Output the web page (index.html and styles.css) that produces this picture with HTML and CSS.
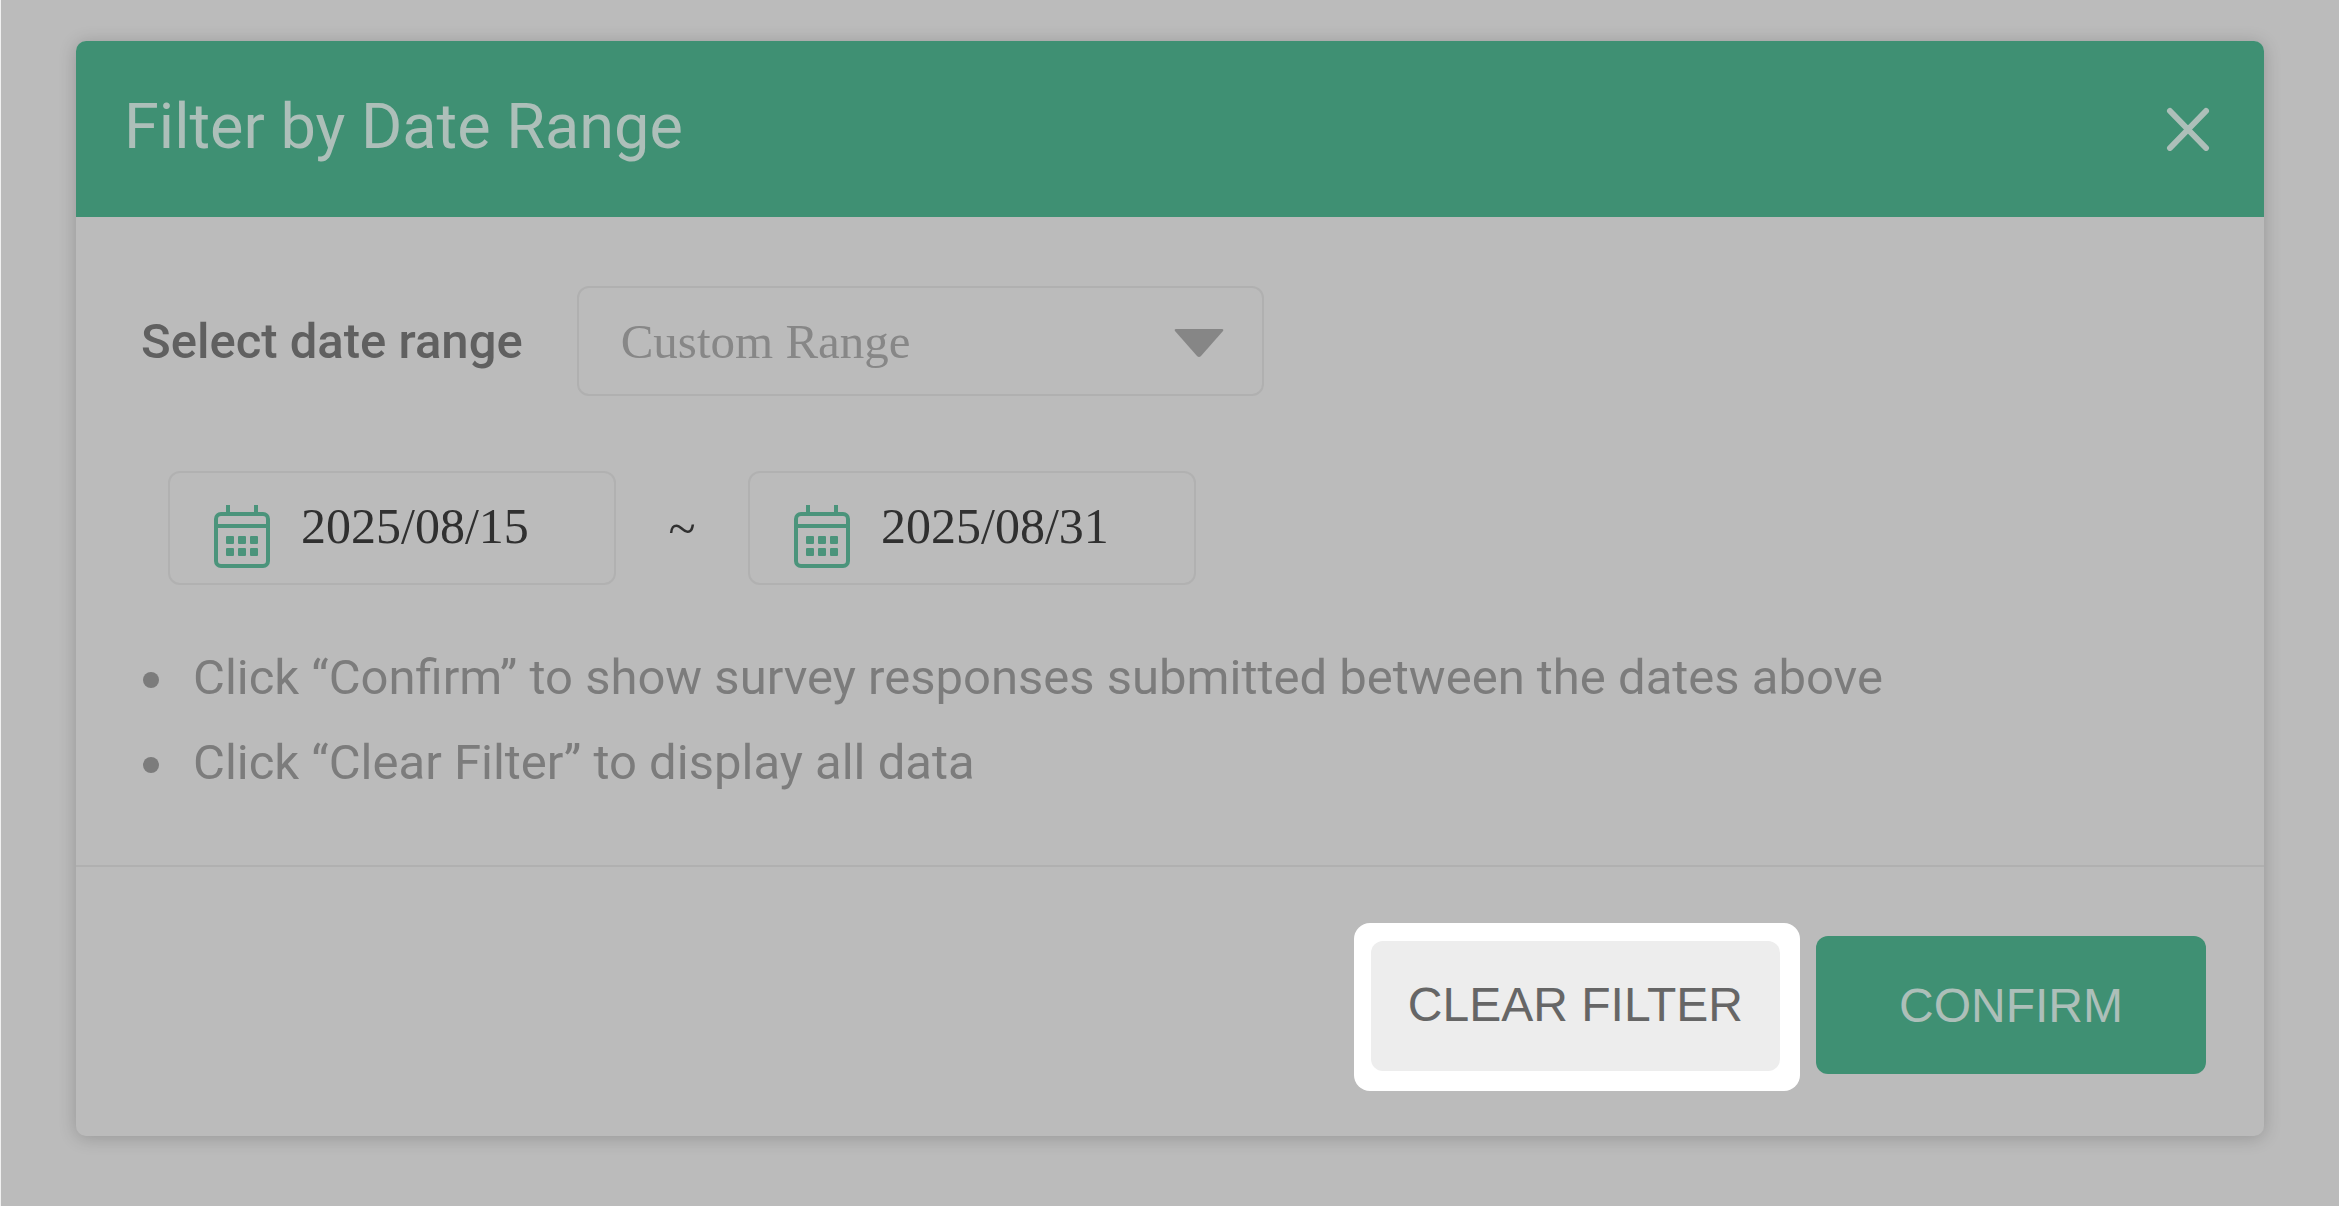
FILE: index.html
```
<!DOCTYPE html>
<html lang="en">
<head>
    <meta charset="UTF-8">
    <meta name="viewport" content="width=device-width, initial-scale=1.0">
    <title>Filter by Date Range</title>
    <link rel="stylesheet" href="styles.css">
</head>
<body>
    <div class="modal">
        <div class="modal-header">
            <h2>Filter by Date Range</h2>
            <button type="button" class="close" aria-label="Close">
                <svg width="44" height="44" viewBox="0 0 44 44">
                    <path d="M4 4L40 41M40 4L4 41" />
                </svg>
            </button>
        </div>

        <div class="modal-body">
            <div class="range-row">
                <label for="range">Select date range</label>
                <div class="select-box">
                    <select id="range">
                        <option>Custom Range</option>
                    </select>
                    <svg class="arrow" width="50" height="28" viewBox="0 0 50 28">
                        <path d="M2 0H48Q50 0 49 2L27 27Q25 29 23 27L1 2Q0 0 2 0Z" />
                    </svg>
                </div>
            </div>

            <div class="date-row">
                <label class="date-box">
                    <svg class="calendar" width="56" height="64" viewBox="0 0 56 64">
                        <rect x="2" y="10" width="52" height="52" rx="5" />
                        <path d="M2 22H54M14 1V10M42 1V10" />
                        <path class="days" d="M13 33h6v6h-6zM25 33h6v6h-6zM37 33h6v6h-6zM13 45h6v6h-6zM25 45h6v6h-6zM37 45h6v6h-6z" />
                    </svg>
                    <input type="text" value="2025/08/15" aria-label="Start date">
                </label>
                <span class="tilde">~</span>
                <label class="date-box">
                    <svg class="calendar" width="56" height="64" viewBox="0 0 56 64">
                        <rect x="2" y="10" width="52" height="52" rx="5" />
                        <path d="M2 22H54M14 1V10M42 1V10" />
                        <path class="days" d="M13 33h6v6h-6zM25 33h6v6h-6zM37 33h6v6h-6zM13 45h6v6h-6zM25 45h6v6h-6zM37 45h6v6h-6z" />
                    </svg>
                    <input type="text" value="2025/08/31" aria-label="End date">
                </label>
            </div>

            <ul class="notes">
                <li>Click “Confirm” to show survey responses submitted between the dates above</li>
                <li>Click “Clear Filter” to display all data</li>
            </ul>
        </div>

        <div class="modal-footer">
            <div class="highlight">
                <button type="button" class="btn clear">CLEAR FILTER</button>
            </div>
            <button type="button" class="btn confirm">CONFIRM</button>
        </div>
    </div>
</body>
</html>
```
FILE: styles.css
```
* {
    box-sizing: border-box;
}
body {
    margin: 0;
    padding: 41px 75px 68px;
    min-height: 100vh;
    border-left: 1px solid #f0f0f0;
    background: #bbbbbb;
    font-family: Roboto, sans-serif;
    font-size: 49px;
}
.modal {
    border-radius: 10px;
    background: #bbbbbb;
    box-shadow: 0 2px 18px rgba(0, 0, 0, 0.2);
}
.modal-header {
    display: flex;
    justify-content: space-between;
    align-items: center;
    height: 176px;
    padding: 0 54px 0 48px;
    border-radius: 10px 10px 0 0;
    background: #3f9073;
}
.modal-header h2 {
    margin: 0 0 6px;
    color: #adbfb9;
    font-size: 63px;
    font-weight: 400;
}
.close {
    display: flex;
    padding: 0;
    border: none;
    background: none;
    cursor: pointer;
}
.close path {
    fill: none;
    stroke: #adbfb9;
    stroke-width: 6;
    stroke-linecap: round;
}
.modal-body {
    padding: 69px 65px 60px;
}
.range-row {
    display: flex;
    align-items: center;
    gap: 54px;
}
.range-row label {
    color: #606060;
    font-weight: 500;
}
.select-box {
    position: relative;
    width: 687px;
}
.select-box select {
    display: block;
    width: 100%;
    height: 110px;
    padding: 0 42px;
    border: 2px solid #b0b0b0;
    border-radius: 12px;
    appearance: none;
    background: transparent;
    color: #878787;
    font-family: "Liberation Serif", serif;
    font-size: 49px;
}
.arrow {
    position: absolute;
    top: 43px;
    right: 40px;
    fill: #868686;
    pointer-events: none;
}
.date-row {
    display: flex;
    align-items: center;
    margin: 75px 0 0 27px;
}
.date-box {
    display: flex;
    align-items: center;
    gap: 31px;
    width: 448px;
    height: 114px;
    padding: 0 44px;
    border: 2px solid #b1b1b1;
    border-radius: 12px;
}
.calendar {
    flex: none;
    margin-top: 16px;
    fill: none;
    stroke: #4b947b;
    stroke-width: 4;
}
.calendar .days {
    fill: #4b947b;
    stroke-width: 2;
    stroke-linejoin: round;
}
.date-box input {
    width: 100%;
    min-width: 0;
    padding: 0 0 4px;
    border: none;
    outline: none;
    background: none;
    color: #303030;
    font-family: "Liberation Serif", serif;
    font-size: 50px;
}
.tilde {
    width: 132px;
    color: #303030;
    font-family: "Liberation Serif", serif;
    font-size: 50px;
    text-align: center;
}
.notes {
    margin: 50px 0 0;
    padding: 0;
    list-style: none;
    color: #7c7c7c;
    line-height: 85px;
}
.notes li {
    display: flex;
    align-items: center;
    gap: 34px;
}
.notes li::before {
    content: "";
    width: 16px;
    height: 16px;
    margin: 4px 0 0 2px;
    border-radius: 50%;
    background: #7c7c7c;
}
.modal-footer {
    display: flex;
    justify-content: flex-end;
    align-items: center;
    gap: 16px;
    padding: 56px 58px 45px;
    border-top: 2px solid #b0b0b0;
}
.highlight {
    padding: 18px 20px 20px 17px;
    border-radius: 16px;
    background: #ffffff;
}
.btn {
    display: block;
    border: none;
    border-radius: 12px;
    font-family: "Liberation Sans", Arial, sans-serif;
    font-size: 48px;
    cursor: pointer;
}
.clear {
    height: 130px;
    padding: 0 37px 4px;
    background: #ededed;
    color: #666666;
}
.confirm {
    height: 138px;
    margin-bottom: 4px;
    padding: 0 83px;
    background: #3f9073;
    color: #adbfb9;
}
```
